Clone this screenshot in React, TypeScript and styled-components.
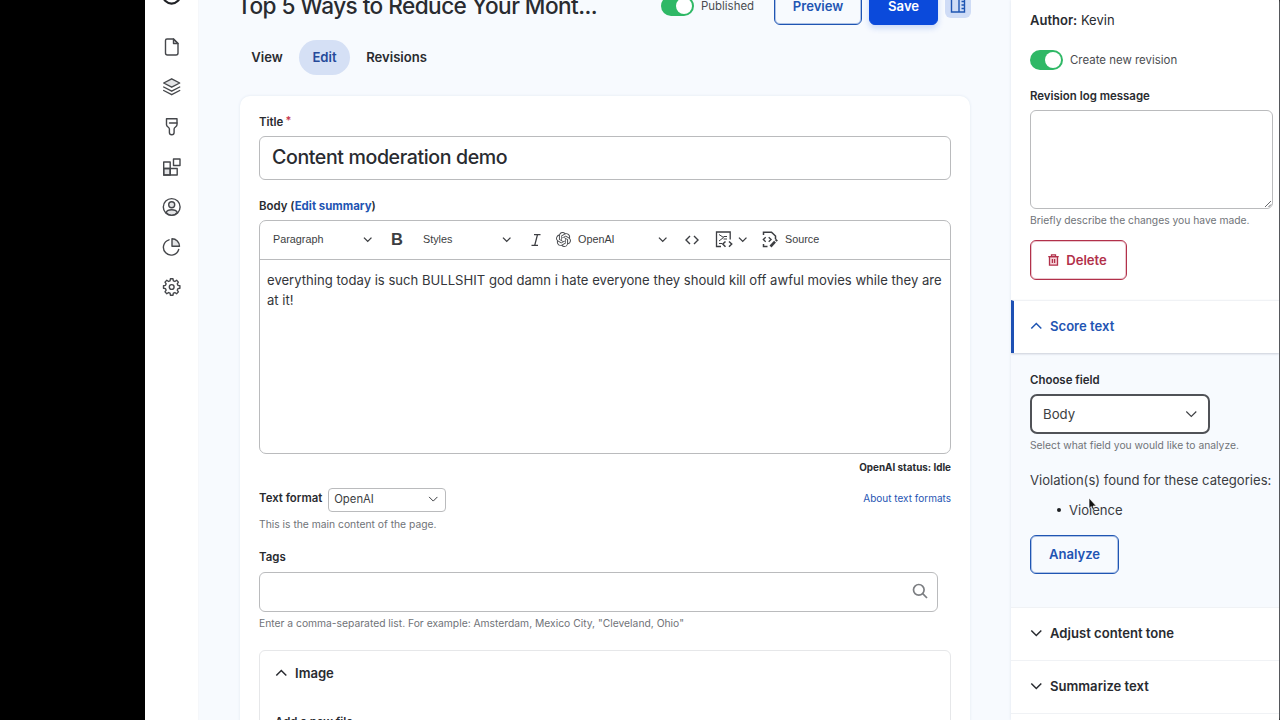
import React from "react";
import styled, { createGlobalStyle, css } from "styled-components";
import { SiOpenai } from "react-icons/si";

const blue = "#1f55b3";
const ink = "#292b30";
const red = "#b2304a";
const line = "#babbbd";

const Global = createGlobalStyle`
  * { box-sizing: border-box; }
  body { margin: 0; background: #000; overflow: hidden; }
  h1, ul { margin: 0; padding: 0; }
  svg { display: block; flex: none; }
`;

const Page = styled.div`
  width: 1280px;
  height: 720px;
  padding: 0 1px 0 145px;
  display: flex;
  overflow: hidden;
  background: #000;
  color: ${ink};
  font-family: Inter, "Liberation Sans", sans-serif;
  font-size: 13.1px;
`;

const Rail = styled.nav`
  width: 54px;
  flex: none;
  background: #fff;
  border-right: 1px solid #f5f7fa;
  display: flex;
  flex-direction: column;
  align-items: center;
  svg { margin-bottom: 20px; }
`;

const Logo = styled.div`
  height: 37px;
  svg { margin: -15px 0 0; }
`;

const Main = styled.main`
  width: 812px;
  flex: none;
  background: #f7fafe;
  padding: 0 41px;
  overflow: hidden;
`;

const Header = styled.header`
  display: flex;
  align-items: center;
  height: 38px;
  margin-top: -13px;
`;

const Heading = styled.h1`
  width: 424px;
  margin-left: -3px;
  flex: none;
  font-size: 22.6px;
  line-height: 38px;
  font-weight: 500;
  letter-spacing: -0.55px;
  white-space: nowrap;
`;

const Switch = styled.span`
  width: 33px;
  height: 20px;
  flex: none;
  border-radius: 10px;
  background: #2fb866;
  padding: 2px;
  display: flex;
  justify-content: flex-end;
  &::after {
    content: "";
    width: 16px;
    height: 16px;
    border-radius: 50%;
    background: #fff;
  }
`;

const SwitchText = styled.span`
  font-size: 11.45px;
  color: #4a4c50;
  margin-left: 7px;
`;

const Button = styled.button<{ $kind?: "solid" | "danger"; $w: number; $h?: number }>`
  width: ${(p) => p.$w}px;
  height: ${(p) => p.$h ?? 39}px;
  flex: none;
  padding: 0 0 1px;
  display: flex;
  align-items: center;
  justify-content: center;
  gap: 7px;
  border-radius: 6px;
  border: 1px solid ${blue};
  box-shadow: inset 0 0 0 1px #1f55b355;
  background: transparent;
  color: ${blue};
  font: 600 13.1px Inter, sans-serif;
  ${(p) => p.$kind === "solid" && css`
    background: #0b4adb;
    border-color: #0b4adb;
    color: #fff;
    box-shadow: 0 3px 6px #0b4adb33;
  `}
  ${(p) => p.$kind === "danger" && css`
    border-color: ${red};
    box-shadow: inset 0 0 0 1px #b2304a44;
    color: ${red};
    padding-right: 2px;
  `}
`;

const Actions = styled.div`
  display: flex;
  gap: 7px;
  margin-left: 20px;
`;

const PanelToggle = styled.span`
  width: 26px;
  height: 31px;
  border-radius: 6px;
  background: #cfdcf6;
  display: flex;
  align-items: flex-end;
  justify-content: center;
  padding-bottom: 5px;
`;

const Tabs = styled.nav`
  display: flex;
  margin: 15px 0 0 -1px;
  height: 35px;
`;

const Tab = styled.a<{ $active?: boolean }>`
  padding: 0 13.3px;
  margin-right: 3px;
  margin-left: ${(p) => (p.$active ? "0" : "-1px")};
  line-height: 35px;
  border-radius: 18px;
  font-weight: 600;
  color: ${(p) => (p.$active ? "#254a9a" : ink)};
  background: ${(p) => (p.$active ? "#d5e0f5" : "none")};
  &:last-child { margin-left: 0; }
`;

const Card = styled.section`
  margin-top: 21px;
  height: 660px;
  background: #fff;
  border-radius: 10px;
  box-shadow: 0 0 3px #dfe7f1;
  padding: 0 19px;
`;

const Label = styled.div<{ $top?: number; $bottom?: number }>`
  padding: ${(p) => p.$top ?? 17}px 0 ${(p) => p.$bottom ?? 5}px;
  font-size: 11.45px;
  font-weight: 600;
  line-height: 18px;
  b { color: ${blue}; font-weight: 700; }
  sup { color: #c8384e; font-size: 11px; line-height: 0; vertical-align: 2px; margin-left: 2px; }
`;

const TitleInput = styled.div`
  height: 44px;
  border: 1px solid ${line};
  border-radius: 6px;
  padding-left: 12px;
  font-size: 19.6px;
  font-weight: 500;
  line-height: 41px;
  letter-spacing: -0.4px;
`;

const Editor = styled.div`
  height: 234px;
  border: 1px solid ${line};
  border-radius: 7px;
`;

const Toolbar = styled.div`
  height: 39px;
  border-bottom: 1px solid ${line};
  display: flex;
  align-items: center;
  padding: 0 0 1px 13px;
  font: 10.8px "Liberation Sans", Arial, sans-serif;
  color: #3c3e42;
`;

const ToolLabel = styled.span<{ $w: number; $pad?: number }>`
  width: ${(p) => p.$w}px;
  padding: 0 0 2px ${(p) => p.$pad ?? 0}px;
`;

const Bold = styled.b`
  width: 32px;
  margin-left: 19px;
  font-size: 16.5px;
`;

const ToolIcon = styled.span<{ $left: number }>`
  margin-left: ${(p) => p.$left}px;
`;

const EditorText = styled.div`
  padding: 11px 0 0 7px;
  line-height: 19.6px;
  white-space: pre;
  color: #34363a;
`;

const Status = styled.div`
  line-height: 26px;
  text-align: right;
  font-size: 9.9px;
  font-weight: 700;
`;

const FormatRow = styled.div`
  display: flex;
  align-items: center;
  height: 23px;
  margin-top: 8px;
  font-size: 11.4px;
  font-weight: 600;
`;

const FormatLabel = styled.span`
  padding-bottom: 3px;
`;

const Select = styled.span<{ $large?: boolean }>`
  display: flex;
  align-items: center;
  justify-content: space-between;
  font-weight: 400;
  background: #fff;
  color: #3c3e42;
  ${(p) => p.$large ? css`
    width: 180px;
    height: 40px;
    border: 2px solid #505257;
    border-radius: 7px;
    padding: 0 11px 1px;
    font-size: 13.2px;
  ` : css`
    width: 118px;
    height: 24px;
    margin-left: 6px;
    border: 1px solid ${line};
    border-radius: 4px;
    padding: 0 7px 2px 5px;
    font-size: 11.3px;
  `}
`;

const FormatLink = styled.a`
  margin-left: auto;
  padding-bottom: 3px;
  color: ${blue};
  font-size: 10px;
  font-weight: 400;
`;

const Hint = styled.div<{ $lh: number }>`
  font-size: 10.3px;
  line-height: ${(p) => p.$lh}px;
  color: #707378;
  white-space: nowrap;
`;

const TagInput = styled.div`
  width: 679px;
  height: 40px;
  border: 1px solid ${line};
  border-radius: 6px;
  display: flex;
  align-items: center;
  justify-content: flex-end;
  padding: 0 9px 2px;
`;

const ImageBox = styled.div`
  margin-top: 15px;
  height: 120px;
  border: 1px solid #e6e7e9;
  border-radius: 6px;
  padding: 0 15px;
`;

const Summary = styled.div`
  display: flex;
  align-items: center;
  gap: 8px;
  height: 45px;
  padding-bottom: 1px;
  font-weight: 600;
`;

const Side = styled.aside`
  width: 268px;
  flex: none;
  background: #fff;
  box-shadow: 0 0 3px #dfe5ee;
  overflow: hidden;
`;

const Meta = styled.div`
  height: 300px;
  padding: 11px 0 0 19px;
`;

const Author = styled.div`
  line-height: 19px;
  font-size: 13px;
  b { font-weight: 600; }
`;

const RevisionToggle = styled.div`
  display: flex;
  align-items: center;
  margin-top: 20px;
  height: 20px;
`;

const TextArea = styled.div`
  width: 243px;
  height: 99px;
  border: 1px solid ${line};
  border-radius: 6px;
  display: flex;
  align-items: flex-end;
  justify-content: flex-end;
  & + div { margin-bottom: 9px; }
`;

const Accordion = styled.div<{ $open?: boolean }>`
  height: 53px;
  display: flex;
  align-items: center;
  gap: 8px;
  padding: 0 0 2px 19px;
  border-top: 1px solid #f0f2f5;
  font-size: 13.1px;
  font-weight: 600;
  background: #fff;
  ${(p) => p.$open && css`
    position: relative;
    color: ${blue};
    padding-left: 16px;
    border-left: 3px solid #1d50b4;
    box-shadow: 0 1px 2px #c9ced8;
  `}
`;

const Score = styled.div`
  height: 254px;
  padding-left: 19px;
  background: #f7fafe;
`;

const Result = styled.div`
  margin-top: 11px;
  line-height: 24px;
  white-space: nowrap;
  color: #3a3c41;
`;

const Violations = styled.ul`
  padding-left: 27px;
  margin: 6px 0 13px;
  line-height: 24px;
  color: #3a3c41;
  list-style: none;
  li { display: flex; align-items: center; gap: 8px; }
  li::before {
    content: "";
    width: 4px;
    height: 4px;
    border-radius: 50%;
    background: #1d1f23;
  }
`;

const Pointer = styled.svg`
  position: absolute;
  left: 1087px;
  top: 497px;
`;

const Chevron = ({ up, size = 12, w = 1.5 }: { up?: boolean; size?: number; w?: number }) => (
  <svg width={size} height={size} viewBox="0 0 12 12" fill="none" stroke="currentColor" strokeWidth={w}>
    <path d={up ? "M1.300 8.500 6.300 3.500l5 5" : "M1.300 3.500l5 5 5-5"} />
  </svg>
);

const RailIcon = ({ children }: { children: React.ReactNode }) => (
  <svg width="20" height="20" viewBox="0 0 20 20" fill="none" stroke="#45474b" strokeWidth="1.4" strokeLinejoin="round" strokeLinecap="round">
    {children}
  </svg>
);

const gear = (() => {
  const pts: string[] = [];
  for (let i = 0; i < 8; i++) {
    const at = (r: number, deg: number) => {
      const a = ((i * 45 + deg) * Math.PI) / 180;
      return `${(9.7 + r * Math.sin(a)).toFixed(2)} ${(10 - r * Math.cos(a)).toFixed(2)}`;
    };
    pts.push(at(6.4, -15), at(8.3, -9), at(8.3, 9), at(6.4, 15));
  }
  return `M${pts.join("L")}Z`;
})();

export default function App() {
  return (
    <>
      <Global />
      <Page>
        <Rail>
          <Logo>
            <svg width="20" height="20" viewBox="0 0 20 20" fill="none" stroke="#202226" strokeWidth="2.2">
              <circle cx="9.6" cy="10" r="8.6" />
            </svg>
          </Logo>
          <RailIcon>
            <path d="M11.500 2v4.500H16z" fill="#e3e4e6" />
            <path d="M5 2h6.500L16 6.500V16a2 2 0 0 1-2 2H5.500a2 2 0 0 1-2-2V3.500A1.500 1.500 0 0 1 5 2z" />
          </RailIcon>
          <RailIcon>
            <path d="M9.700 1.800 17.700 6l-8 4.200L1.700 6z" fill="#e3e4e6" />
            <path d="M1.700 10l8 4.200 8-4.200M1.700 13.500l8 4.200 8-4.200" />
          </RailIcon>
          <RailIcon>
            <path d="M4.500 1.800h10.500v6c0 2-2.900 2.400-2.900 4.200v3.400a2.300 2.300 0 0 1-4.700 0V12c0-1.800-2.900-2.200-2.900-4.200z" />
            <path d="M7.500 6H15" />
          </RailIcon>
          <RailIcon>
            <path d="M1.700 11.500h6.500V18H1.700z" fill="#e3e4e6" />
            <path d="M1.700 5h6.500v13H1.700zM1.700 11.500h13.500V18H1.700zM11.500 2H18v6.500h-6.500z" />
          </RailIcon>
          <RailIcon>
            <path d="M4 15.500c1-2 3-2.800 5.700-2.800s4.700.8 5.700 2.800c-1.700 2-3.700 2.900-5.700 2.900s-4-.9-5.700-2.900z" fill="#e3e4e6" />
            <circle cx="9.700" cy="10" r="8.400" />
            <circle cx="9.700" cy="7.700" r="3" fill="#e3e4e6" />
          </RailIcon>
          <RailIcon>
            <path d="M10 1.800a7.500 7.500 0 0 1 7.500 7.500H10z" fill="#e3e4e6" />
            <path d="M7 2.800a7.800 7.800 0 1 0 9.700 9.700" />
          </RailIcon>
          <RailIcon>
            <path d={gear} />
            <circle cx="9.700" cy="10" r="2.400" />
          </RailIcon>
        </Rail>

        <Main>
          <Header>
            <Heading>Top 5 Ways to Reduce Your Mont...</Heading>
            <Switch />
            <SwitchText>Published</SwitchText>
            <Actions>
              <Button $w={88} $h={38}>Preview</Button>
              <Button $w={69} $h={38} $kind="solid">Save</Button>
              <PanelToggle>
                <svg width="16" height="16" viewBox="0 0 16 16" fill="none" stroke={blue} strokeWidth="1.400">
                  <path d="M1.500 1h13v14h-13zM9 1v14M11.500 4.500h3M11.500 8h3M11.500 11.500h3" />
                </svg>
              </PanelToggle>
            </Actions>
          </Header>
          <Tabs>
            <Tab>View</Tab>
            <Tab $active>Edit</Tab>
            <Tab>Revisions</Tab>
          </Tabs>
          <Card>
            <Label>Title<sup>*</sup></Label>
            <TitleInput>Content moderation demo</TitleInput>
            <Label>Body (<b>Edit summary</b>)</Label>
            <Editor>
              <Toolbar>
                <ToolLabel $w={90}>Paragraph</ToolLabel>
                <Chevron size={9} w={1.8} />
                <Bold>B</Bold>
                <ToolLabel $w={79}>Styles</ToolLabel>
                <Chevron size={9} w={1.8} />
                <ToolIcon $left={20}>
                  <svg width="10" height="12" viewBox="0 0 10 12" fill="none" stroke="#3c3e42" strokeWidth="1.300">
                    <path d="M3 .7h6.500M.5 11.300H7M6.500.7l-2.800 10.600" />
                  </svg>
                </ToolIcon>
                <ToolIcon $left={15}><SiOpenai size={15} color="#4a4c50" /></ToolIcon>
                <ToolLabel $w={87} $pad={7}>OpenAI</ToolLabel>
                <Chevron size={9} w={1.8} />
                <ToolIcon $left={18}>
                  <svg width="14" height="10" viewBox="0 0 14 10" fill="none" stroke="#3c3e42" strokeWidth="1.400">
                    <path d="M5 1 1 5l4 4M9 1l4 4-4 4" />
                  </svg>
                </ToolIcon>
                <ToolIcon $left={16}>
                  <svg width="18" height="17" viewBox="0 0 18 17" fill="none" stroke="#3c3e42" strokeWidth="1.300">
                    <path d="M6 15.500H1.500V1h13.700v7.500" />
                    <path d="M4 3.500l4.500 3L4 10M8.500 5.500H12M8.500 8H12M4 12.500h3" strokeWidth="1" />
                    <path d="M10.500 10.500 7.800 13l2.700 2.700M14 10.500l2.700 2.500-2.700 2.700" strokeWidth="1.500" />
                  </svg>
                </ToolIcon>
                <ToolIcon $left={5}><Chevron size={9} w={1.8} /></ToolIcon>
                <ToolIcon $left={15}>
                  <svg width="16" height="17" viewBox="0 0 16 17" fill="none" stroke="#3c3e42" strokeWidth="1.500">
                    <path d="M1.500 4V1.200h8l4 3.800v3M1.500 13v2.600h4" />
                    <path d="M3.700 6.200 1.300 8.500l2.400 2.300M6.700 6.200l2.400 2.300-2.400 2.300" strokeWidth="1.300" />
                    <path d="M8.500 15.500 13 10.700" strokeWidth="2.600" />
                    <path d="m13.700 9.900 1.300-1.300" strokeWidth="2.600" />
                  </svg>
                </ToolIcon>
                <ToolLabel $w={50} $pad={7}>Source</ToolLabel>
              </Toolbar>
              <EditorText>{"everything today is such BULLSHIT god damn i hate everyone they should kill off awful movies while they are\nat it!"}</EditorText>
            </Editor>
            <Status>OpenAI status: Idle</Status>
            <FormatRow>
              <FormatLabel>Text format</FormatLabel>
              <Select>OpenAI<Chevron size={10} w={1.200} /></Select>
              <FormatLink>About text formats</FormatLink>
            </FormatRow>
            <Hint $lh={27}>This is the main content of the page.</Hint>
            <Label $top={10} $bottom={6}>Tags</Label>
            <TagInput>
              <svg width="16" height="16" viewBox="0 0 16 16" fill="none" stroke="#7c7e82" strokeWidth="1.700">
                <circle cx="6.800" cy="6.800" r="5.300" />
                <path d="m10.700 10.700 4.300 4.300" />
              </svg>
            </TagInput>
            <Hint $lh={23}>Enter a comma-separated list. For example: Amsterdam, Mexico City, "Cleveland, Ohio"</Hint>
            <ImageBox>
              <Summary><Chevron up />Image</Summary>
              <Label>Add a new file</Label>
            </ImageBox>
          </Card>
        </Main>

        <Side>
          <Meta>
            <Author><b>Author:</b> Kevin</Author>
            <RevisionToggle>
              <Switch />
              <SwitchText>Create new revision</SwitchText>
            </RevisionToggle>
            <Label>Revision log message</Label>
            <TextArea>
              <svg width="8" height="8" viewBox="0 0 8 8" stroke="#66686c" strokeWidth="1">
                <path d="M1 7 7 1M4.500 7 7 4.500" />
              </svg>
            </TextArea>
            <Hint $lh={22}>Briefly describe the changes you have made.</Hint>
            <Button $kind="danger" $w={97} $h={40}>
              <svg width="11" height="12" viewBox="0 0 11 12" fill="none" stroke="currentColor" strokeWidth="1.300">
                <path d="M1.500 2.700h8v8.500h-8z" fill="#f6d5db" />
                <path d="M.3 2.700h10.400M3.500 2.500V.8h4v1.700M4.400 5v4M6.600 5v4" />
              </svg>
              Delete
            </Button>
          </Meta>
          <Accordion $open><Chevron up />Score text</Accordion>
          <Score>
            <Label $top={18}>Choose field</Label>
            <Select $large>Body<Chevron size={12} w={1.1} /></Select>
            <Hint $lh={23}>Select what field you would like to analyze.</Hint>
            <Result>Violation(s) found for these categories:</Result>
            <Violations><li>Violence</li></Violations>
            <Button $w={89}>Analyze</Button>
          </Score>
          <Accordion><Chevron />Adjust content tone</Accordion>
          <Accordion><Chevron />Summarize text</Accordion>
          <Accordion />
        </Side>
      </Page>
      <Pointer width="11" height="15" viewBox="0 0 11 15" fill="#111" stroke="#fff" strokeWidth=".7">
        <path d="M2 1v10.500l2.300-2 1.700 3.800 1.600-.7L6 9h3.300z" />
      </Pointer>
    </>
  );
}
